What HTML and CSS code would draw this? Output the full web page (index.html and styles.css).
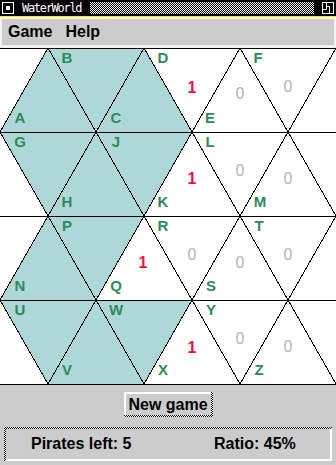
FILE: index.html
```html
<!DOCTYPE html>
<html lang="en">

<head>
    <meta charset="UTF-8">
    <meta name="viewport" content="width=device-width, initial-scale=1.0">
    <title>WaterWorld</title>
    <link rel="stylesheet" href="styles.css">
</head>

<body>
    <!-- Window title bar -->
    <div class="titlebar">
        <span class="win-icon"><span></span></span>
        <span class="win-title">WaterWorld</span>
        <span class="win-grip"></span>
        <svg class="win-max" width="12" height="12" viewBox="0 0 12 12">
            <rect x="0.5" y="0.5" width="11" height="11" fill="none" stroke="#fff" />
            <path d="M4.5 0.5 V7.5 H0.5" fill="none" stroke="#fff" />
            <path d="M4.5 4.5 H7.5 V11.5" fill="none" stroke="#fff" />
        </svg>
    </div>
    <div class="accent"></div>

    <!-- Menu bar -->
    <div class="menubar">
        <div class="menu">
            <span>Game</span>
            <span>Help</span>
        </div>
    </div>

    <!-- Board -->
    <svg class="board" width="336" height="337" viewBox="0 0 336 337">
        <g class="water">
            <polygon points="48,0 144,0 192,84 144,168 48,168 0,84" />
            <polygon points="48,168 144,168 96,252 0,252" />
            <polygon points="0,252 192,252 144,336 48,336" />
        </g>
        <g class="grid">
            <line x1="0" y1="0.5" x2="336" y2="0.5" />
            <line x1="0" y1="84.5" x2="336" y2="84.5" />
            <line x1="0" y1="168.5" x2="336" y2="168.5" />
            <line x1="0" y1="252.5" x2="336" y2="252.5" />
            <line x1="0" y1="336.5" x2="336" y2="336.5" />
            <line x1="-240" y1="0" x2="-48" y2="336" />
            <line x1="-144" y1="0" x2="48" y2="336" />
            <line x1="-48" y1="0" x2="144" y2="336" />
            <line x1="48" y1="0" x2="240" y2="336" />
            <line x1="144" y1="0" x2="336" y2="336" />
            <line x1="240" y1="0" x2="432" y2="336" />
            <line x1="336" y1="0" x2="528" y2="336" />
            <line x1="48" y1="0" x2="-144" y2="336" />
            <line x1="144" y1="0" x2="-48" y2="336" />
            <line x1="240" y1="0" x2="48" y2="336" />
            <line x1="336" y1="0" x2="144" y2="336" />
            <line x1="432" y1="0" x2="240" y2="336" />
            <line x1="528" y1="0" x2="336" y2="336" />
        </g>
        <g class="lbl">
            <text x="67" y="15">B</text>
            <text x="163" y="15">D</text>
            <text x="258" y="15">F</text>
            <text x="20" y="75">A</text>
            <text x="116" y="75">C</text>
            <text x="210" y="75">E</text>
            <text x="20" y="99">G</text>
            <text x="116" y="99">J</text>
            <text x="210" y="99">L</text>
            <text x="67" y="159">H</text>
            <text x="163" y="159">K</text>
            <text x="260" y="159">M</text>
            <text x="67" y="183">P</text>
            <text x="163" y="183">R</text>
            <text x="259" y="183">T</text>
            <text x="20" y="243">N</text>
            <text x="116" y="243">Q</text>
            <text x="211" y="243">S</text>
            <text x="20" y="267">U</text>
            <text x="116" y="267">W</text>
            <text x="211" y="267">Y</text>
            <text x="67" y="327">V</text>
            <text x="163" y="327">X</text>
            <text x="259" y="327">Z</text>
        </g>
        <g class="num">
            <text class="hit" x="192" y="44.5">1</text>
            <text x="240" y="50.5">0</text>
            <text x="288" y="43.5">0</text>
            <text class="hit" x="192" y="135.5">1</text>
            <text x="240" y="127.5">0</text>
            <text x="288" y="135.5">0</text>
            <text class="hit" x="143" y="219.5">1</text>
            <text x="192" y="211.5">0</text>
            <text x="240" y="219.5">0</text>
            <text x="288" y="211.5">0</text>
            <text class="hit" x="192" y="304.5">1</text>
            <text x="240" y="295.5">0</text>
            <text x="288" y="303.5">0</text>
        </g>
    </svg>

    <!-- Controls -->
    <div class="panel">
        <div class="btn-wrap">
            <button type="button" class="btn">New game</button>
        </div>
        <div class="status">
            <div class="status-inner">
                <span class="pirates">Pirates left: 5</span>
                <span>Ratio: 45%</span>
            </div>
        </div>
    </div>
</body>

</html>
```

FILE: styles.css
```css
body {
    margin: 0;
    width: 336px;
    height: 465px;
    overflow: hidden;
    background-color: #cccccc;
    font-family: "Liberation Sans", Arial, sans-serif;
}

/* Title bar */
.titlebar {
    display: flex;
    align-items: center;
    height: 16px;
    background-color: #000;
    color: #fff;
}

.win-icon {
    display: flex;
    align-items: center;
    justify-content: center;
    box-sizing: border-box;
    width: 12px;
    height: 12px;
    margin-left: 2px;
    border: 1px solid #fff;
}

.win-icon span {
    width: 4px;
    height: 4px;
    background-color: #fff;
}

.win-title {
    width: 62px;
    margin-left: 8px;
    font-family: "DejaVu Sans Mono", monospace;
    font-size: 12px;
    letter-spacing: -1.3px;
}

.win-grip {
    width: 224px;
    height: 12px;
    margin-left: 6px;
    background: repeating-conic-gradient(#000 0 25%, #fff 0 50%) 0 0 / 2px 2px;
}

.win-max {
    display: block;
    margin-left: 8px;
}

.accent {
    height: 1px;
    background-color: #f0f000;
}

/* Menu */
.menubar {
    padding: 2px 2px 3px 2px;
    background-color: #f2f2f2;
}

.menu {
    display: flex;
    gap: 13px;
    height: 26px;
    padding-left: 6px;
    line-height: 26px;
    font-size: 16px;
    font-weight: bold;
    color: #000;
    background-color: #cccccc;
}

/* Board */
.board {
    display: block;
    background-color: #fff;
}

.water polygon {
    fill: #aed8d8;
}

.grid line {
    stroke: #000;
    stroke-width: 1;
    shape-rendering: crispEdges;
}

.lbl text {
    font: bold 15px "Liberation Sans", Arial, sans-serif;
    fill: #2e8b57;
    text-anchor: middle;
}

.num text {
    font: 16px "Liberation Sans", Arial, sans-serif;
    fill: #b4b4b4;
    text-anchor: middle;
}

.num text.hit {
    font-weight: bold;
    fill: #ee1148;
}

/* Bottom panel */
.panel {
    display: flex;
    flex-direction: column;
    align-items: center;
    padding-top: 7px;
}

.btn-wrap {
    padding: 0 2px 2px 0;
    background: repeating-conic-gradient(#000 0 25%, #fff 0 50%) 0 0 / 2px 2px;
}

.btn {
    display: block;
    width: 87px;
    height: 23px;
    margin: 0;
    padding: 0;
    border: 0;
    border-top: 2px solid #fff;
    border-left: 2px solid #fff;
    background-color: #cccccc;
    font-family: "Liberation Sans", Arial, sans-serif;
    font-size: 16px;
    font-weight: bold;
    color: #000;
}

.status {
    align-self: stretch;
    margin: 10px 4px 0 4px;
    padding: 2px 0 0 2px;
    background: repeating-conic-gradient(#000 0 25%, #fff 0 50%) 0 0 / 2px 2px;
}

.status-inner {
    display: flex;
    align-items: center;
    height: 30px;
    padding-left: 25px;
    border-right: 2px solid #fff;
    border-bottom: 2px solid #fff;
    background-color: #cccccc;
    font-size: 16px;
    font-weight: bold;
}

.pirates {
    width: 183px;
}
```
